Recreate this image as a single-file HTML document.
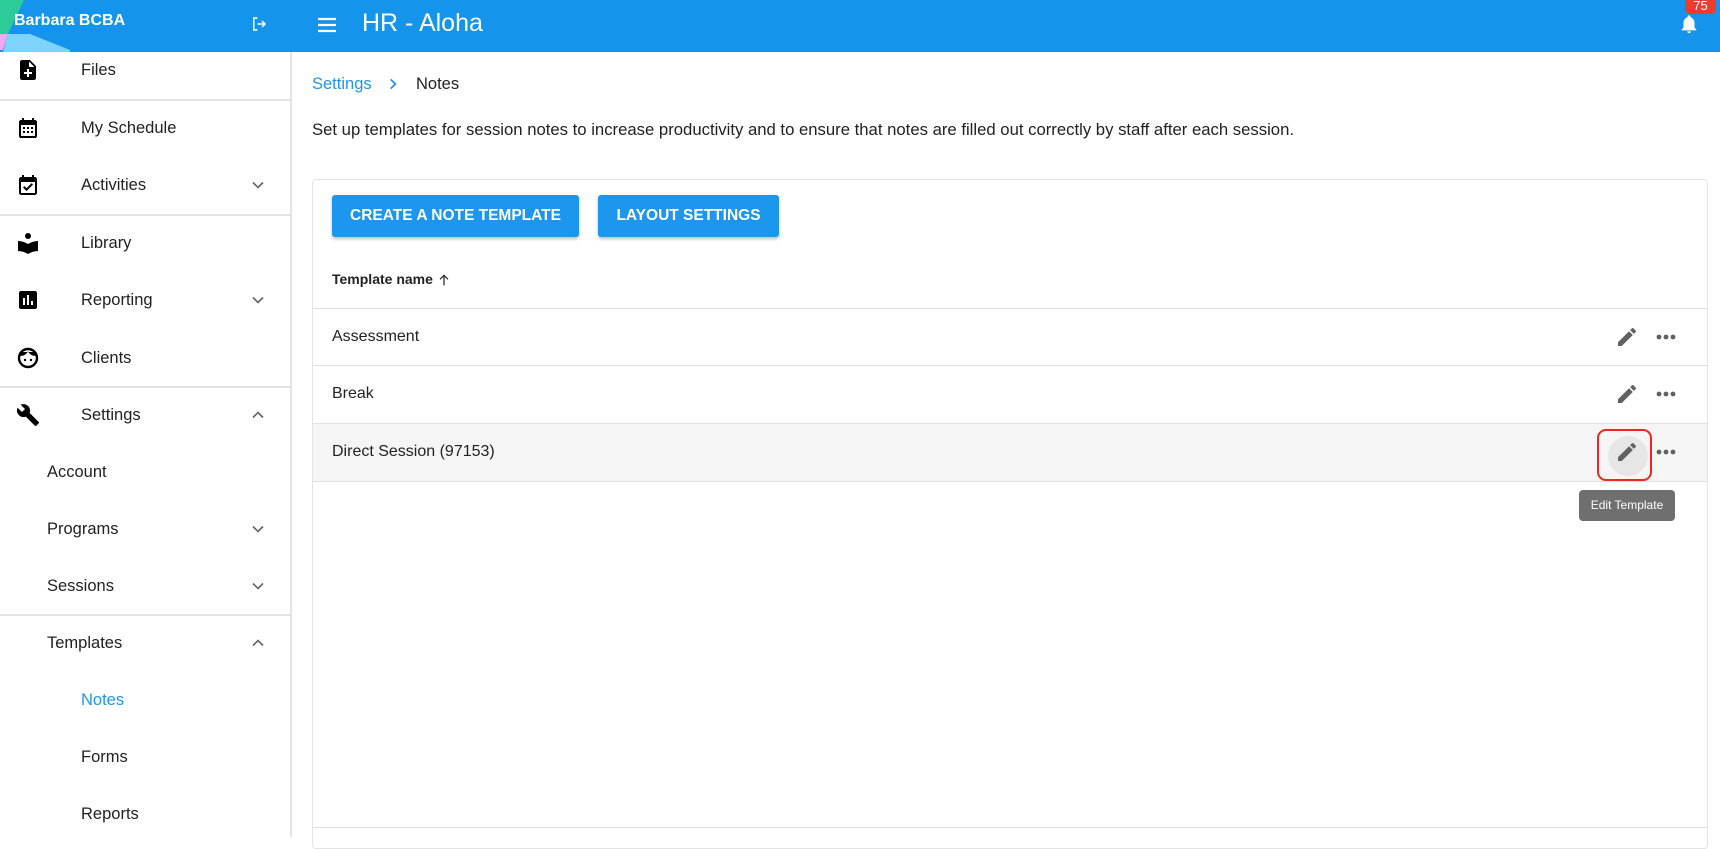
<!DOCTYPE html>
<html><head><meta charset="utf-8"><style>
*{box-sizing:border-box;margin:0;padding:0}
body{width:1720px;height:837px;overflow:hidden;font-family:"Liberation Sans",Roboto,sans-serif;background:#fff;position:relative;color:#212121}
.a{position:absolute}
.hdr{left:0;top:0;width:1720px;height:52px;background:#1594ec}
.side{left:0;top:52px;width:292px;height:785px;border-right:2px solid #e3e3e3;background:#fff}
.it{position:absolute;font-size:16.5px;line-height:20px;color:#222}
.ic{position:absolute;left:16px;width:24px;height:24px}
.chev{position:absolute;left:248px;width:20px;height:20px}
.div{position:absolute;left:0;width:290px;height:2px;background:#e3e3e3}
.row{position:absolute;left:313px;width:1394px;height:1px;background:#e0e0e0}
.btn{position:absolute;top:195px;height:42px;background:#1d96ee;color:#fff;font-weight:bold;font-size:15.5px;line-height:42px;text-align:center;border-radius:3px;box-shadow:0 2px 3px rgba(0,0,0,.25)}
.rt{position:absolute;left:332px;font-size:16px;color:#222;line-height:20px}
</style></head><body>
<div class="a hdr"></div>
<svg class="a" style="left:0;top:0" width="70" height="52"><polygon points="0,0 24,0 8,34 0,34" fill="#2dcb9a"/><polygon points="0,34 8,34 3,50 0,50" fill="#f2a6f0"/><polygon points="8,34 30,34 75,52 3,52" fill="#7dd3fb"/></svg>
<div class="a" style="left:14px;top:12px;color:#fff;font-weight:bold;font-size:16px">Barbara BCBA</div>
<svg class="a" style="left:250px;top:15px" width="18" height="18" viewBox="0 0 24 24" fill="none" stroke="#fff" stroke-width="2"><path d="M10 4H5v16h5M10 12h10M16 8l4 4-4 4"/></svg>
<svg class="a" style="left:315px;top:13px" width="24" height="24" viewBox="0 0 24 24"><path d="M3 6h18M3 12h18M3 18h18" stroke="#fff" stroke-width="2.2"/></svg>
<div class="a" style="left:362px;top:9px;color:#fff;font-size:25px">HR - Aloha</div>
<svg class="a" style="left:1678px;top:13px" width="22" height="22" viewBox="0 0 24 24"><path fill="#fff" d="M12 22c1.1 0 2-.9 2-2h-4c0 1.1.9 2 2 2zm6-6v-5c0-3.07-1.64-5.64-4.5-6.32V4c0-.83-.67-1.5-1.5-1.5s-1.5.67-1.5 1.5v.68C7.63 5.36 6 7.92 6 11v5l-2 2v1h16v-1l-2-2z"/></svg>
<div class="a" style="left:1685px;top:0;width:31px;height:14px;background:#ee3b2f;border-radius:0 0 5px 5px;color:#fff;font-size:13px;line-height:12px;text-align:center">75</div>

<div class="a side"></div>
<svg class="ic" style="top:58px" viewBox="0 0 24 24"><path d="M14 2H6c-1.1 0-2 .9-2 2v16c0 1.1.9 2 2 2h12c1.1 0 2-.9 2-2V8l-6-6zm2 14h-3v3h-2v-3H8v-2h3v-3h2v3h3v2zm-3-7V3.5L18.5 9H13z"/></svg>
<div class="it" style="left:81px;top:60px">Files</div>
<div class="div" style="top:99px"></div>
<svg class="ic" style="top:116px" viewBox="0 0 24 24"><path d="M19 4h-1V2h-2v2H8V2H6v2H5c-1.1 0-2 .9-2 2v14c0 1.1.9 2 2 2h14c1.1 0 2-.9 2-2V6c0-1.1-.9-2-2-2zm0 16H5V9h14v11zM7 11h2v2H7zm4 0h2v2h-2zm4 0h2v2h-2zm-8 4h2v2H7zm4 0h2v2h-2zm4 0h2v2h-2z"/></svg>
<div class="it" style="left:81px;top:118px">My Schedule</div>
<svg class="ic" style="top:173px" viewBox="0 0 24 24"><path d="M19 4h-1V2h-2v2H8V2H6v2H5c-1.1 0-2 .9-2 2v14c0 1.1.9 2 2 2h14c1.1 0 2-.9 2-2V6c0-1.1-.9-2-2-2zm0 16H5V9h14v11zM10.5 18l-3.5-3.5 1.4-1.4 2.1 2.1 5.1-5.1 1.4 1.4z"/></svg>
<div class="it" style="left:81px;top:175px">Activities</div>
<svg class="chev" style="top:175px" viewBox="0 0 24 24"><path d="M6 9l6 6 6-6" fill="none" stroke="#666" stroke-width="2"/></svg>
<div class="div" style="top:214px"></div>
<svg class="ic" style="top:231px" viewBox="0 0 24 24"><circle cx="12" cy="5" r="3"/><path d="M2 10c3 0 7 1 10 3 3-2 7-3 10-3v10c-3 0-7 1-10 3-3-2-7-3-10-3z"/></svg>
<div class="it" style="left:81px;top:233px">Library</div>
<svg class="ic" style="top:288px" viewBox="0 0 24 24"><path d="M19 3H5c-1.1 0-2 .9-2 2v14c0 1.1.9 2 2 2h14c1.1 0 2-.9 2-2V5c0-1.1-.9-2-2-2zM9 17H7v-7h2v7zm4 0h-2V7h2v10zm4 0h-2v-4h2v4z"/></svg>
<div class="it" style="left:81px;top:290px">Reporting</div>
<svg class="chev" style="top:290px" viewBox="0 0 24 24"><path d="M6 9l6 6 6-6" fill="none" stroke="#666" stroke-width="2"/></svg>
<svg class="ic" style="top:346px" viewBox="0 0 24 24"><circle cx="12" cy="12" r="9" fill="none" stroke="#000" stroke-width="2.4"/><path d="M4 10c4 0 7-2 8-5 1 3 4 5 8 5V6H4z"/><circle cx="9" cy="14" r="1.2"/><circle cx="15" cy="14" r="1.2"/></svg>
<div class="it" style="left:81px;top:348px">Clients</div>
<div class="div" style="top:386px"></div>
<svg class="ic" style="top:403px" viewBox="0 0 24 24"><path d="M22.7 19l-9.1-9.1c.9-2.3.4-5-1.5-6.9-2-2-5-2.4-7.4-1.3L9 6 6 9 1.6 4.7C.4 7.1.9 10.1 2.9 12.1c1.9 1.9 4.6 2.4 6.9 1.5l9.1 9.1c.4.4 1 .4 1.4 0l2.3-2.3c.5-.4.5-1.1.1-1.4z"/></svg>
<div class="it" style="left:81px;top:405px">Settings</div>
<svg class="chev" style="top:405px" viewBox="0 0 24 24"><path d="M6 15l6-6 6 6" fill="none" stroke="#666" stroke-width="2"/></svg>
<div class="it" style="left:47px;top:462px">Account</div>
<div class="it" style="left:47px;top:519px">Programs</div>
<svg class="chev" style="top:519px" viewBox="0 0 24 24"><path d="M6 9l6 6 6-6" fill="none" stroke="#666" stroke-width="2"/></svg>
<div class="it" style="left:47px;top:576px">Sessions</div>
<svg class="chev" style="top:576px" viewBox="0 0 24 24"><path d="M6 9l6 6 6-6" fill="none" stroke="#666" stroke-width="2"/></svg>
<div class="div" style="top:614px"></div>
<div class="it" style="left:47px;top:633px">Templates</div>
<svg class="chev" style="top:633px" viewBox="0 0 24 24"><path d="M6 15l6-6 6 6" fill="none" stroke="#666" stroke-width="2"/></svg>
<div class="it" style="left:81px;top:690px;color:#1d96ee">Notes</div>
<div class="it" style="left:81px;top:747px">Forms</div>
<div class="it" style="left:81px;top:804px">Reports</div>

<div class="a" style="left:312px;top:75px;font-size:16.5px;color:#1d96ee">Settings</div>
<svg class="a" style="left:386px;top:77px" width="14" height="14" viewBox="0 0 24 24"><path d="M8 4l8 8-8 8" fill="none" stroke="#1d96ee" stroke-width="3"/></svg>
<div class="a" style="left:416px;top:75px;font-size:16.5px;color:#222">Notes</div>
<div class="a" style="left:312px;top:120px;font-size:16.7px;color:#222">Set up templates for session notes to increase productivity and to ensure that notes are filled out correctly by staff after each session.</div>

<div class="a" style="left:312px;top:179px;width:1396px;height:670px;border:1px solid #e3e3e3;border-radius:4px"></div>
<div class="btn" style="left:332px;width:247px">CREATE A NOTE TEMPLATE</div>
<div class="btn" style="left:598px;width:181px">LAYOUT SETTINGS</div>
<div class="a" style="left:332px;top:271px;font-size:14px;font-weight:bold;color:#222">Template name</div>
<svg class="a" style="left:436px;top:272px" width="16" height="16" viewBox="0 0 24 24"><path d="M12 20V5M6 11l6-6 6 6" fill="none" stroke="#333" stroke-width="2"/></svg>
<div class="row" style="top:308px"></div>
<div class="rt" style="top:327px">Assessment</div>
<div class="row" style="top:365px"></div>
<div class="rt" style="top:384px">Break</div>
<div class="row" style="top:423px"></div>
<div class="a" style="left:313px;top:424px;width:1394px;height:57px;background:#f5f5f5"></div>
<div class="rt" style="top:442px">Direct Session (97153)</div>
<div class="row" style="top:481px"></div>
<div class="row" style="top:827px"></div>

<div class="a" style="left:1608px;top:436px;width:40px;height:40px;border-radius:50%;background:#e6e6e6"></div>
<div class="a" style="left:1597px;top:429px;width:55px;height:52px;border:2.5px solid #f0271c;border-radius:9px"></div>
<svg class="a" style="left:1615px;top:325px" width="24" height="24" viewBox="0 0 24 24"><path fill="#616161" d="M3 17.25V21h3.75L17.81 9.94l-3.75-3.75L3 17.25zM20.71 7.04a1 1 0 000-1.41l-2.34-2.34a1 1 0 00-1.41 0l-1.83 1.83 3.75 3.75 1.83-1.83z"/></svg>
<svg class="a" style="left:1615px;top:382px" width="24" height="24" viewBox="0 0 24 24"><path fill="#616161" d="M3 17.25V21h3.75L17.81 9.94l-3.75-3.75L3 17.25zM20.71 7.04a1 1 0 000-1.41l-2.34-2.34a1 1 0 00-1.41 0l-1.83 1.83 3.75 3.75 1.83-1.83z"/></svg>
<svg class="a" style="left:1615px;top:440px" width="24" height="24" viewBox="0 0 24 24"><path fill="#616161" d="M3 17.25V21h3.75L17.81 9.94l-3.75-3.75L3 17.25zM20.71 7.04a1 1 0 000-1.41l-2.34-2.34a1 1 0 00-1.41 0l-1.83 1.83 3.75 3.75 1.83-1.83z"/></svg>
<svg class="a" style="left:1656px;top:332px" width="20" height="10"><circle cx="3" cy="5" r="2.4" fill="#616161"/><circle cx="10" cy="5" r="2.4" fill="#616161"/><circle cx="17" cy="5" r="2.4" fill="#616161"/></svg>
<svg class="a" style="left:1656px;top:389px" width="20" height="10"><circle cx="3" cy="5" r="2.4" fill="#616161"/><circle cx="10" cy="5" r="2.4" fill="#616161"/><circle cx="17" cy="5" r="2.4" fill="#616161"/></svg>
<svg class="a" style="left:1656px;top:447px" width="20" height="10"><circle cx="3" cy="5" r="2.4" fill="#616161"/><circle cx="10" cy="5" r="2.4" fill="#616161"/><circle cx="17" cy="5" r="2.4" fill="#616161"/></svg>
<div class="a" style="left:1579px;top:490px;width:96px;height:31px;background:#6f6f6f;border-radius:4px;color:#fff;font-size:12px;line-height:31px;text-align:center">Edit Template</div>
</body></html>
